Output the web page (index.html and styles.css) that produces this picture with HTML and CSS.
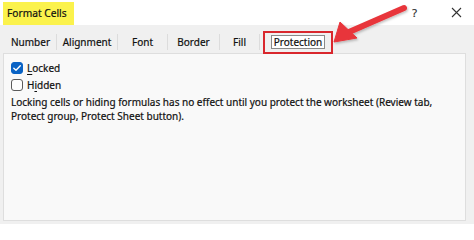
FILE: index.html
```html
<!DOCTYPE html>
<html>
<head>
<meta charset="utf-8">
<link rel="stylesheet" href="styles.css">
</head>
<body>
<div class="dialog">
  <div class="titlebar">
    <div class="title">Format Cells</div>
    <div class="controls">
      <span class="help">?</span>
      <svg class="close" width="11" height="11" viewBox="0 0 11 11"><path d="M1 1 L10 10 M10 1 L1 10" stroke="#333" stroke-width="1.1" fill="none"/></svg>
    </div>
  </div>
  <div class="tabs">
    <div class="tab t-number">Number</div>
    <div class="tab t-align">Alignment</div>
    <div class="tab t-font">Font</div>
    <div class="tab t-border">Border</div>
    <div class="tab t-fill">Fill</div>
    <div class="tab-selected"><span class="focus">Protection</span></div>
  </div>
  <div class="panel">
    <div class="check-row">
      <span class="box checked"><svg width="12" height="12" viewBox="0 0 12 12"><path d="M2.8 6.2 L5 8.3 L9.3 3.8" stroke="#fff" stroke-width="1.4" fill="none" stroke-linecap="round" stroke-linejoin="round"/></svg></span>
      <span class="label"><u>L</u>ocked</span>
    </div>
    <div class="check-row">
      <span class="box"></span>
      <span class="label">H<u>i</u>dden</span>
    </div>
    <p class="note">Locking cells or hiding formulas has no effect until you protect the worksheet (Review tab,<br>Protect group, Protect Sheet button).</p>
  </div>
  <svg class="arrow" width="474" height="224" viewBox="0 0 474 224">
    <defs>
      <filter id="sh" x="-20%" y="-20%" width="140%" height="140%">
        <feDropShadow dx="1" dy="1.5" stdDeviation="1.2" flood-color="#000" flood-opacity="0.25"/>
      </filter>
    </defs>
    <g filter="url(#sh)" fill="#e8353b" stroke="#e8353b">
      <line x1="404" y1="8" x2="349" y2="32" stroke-width="6" stroke-linecap="round"/>
      <polygon points="334,42 340,22 357,38" stroke-width="1" stroke-linejoin="round"/>
    </g>
  </svg>
</div>
</body>
</html>
```
FILE: styles.css
```css
* { box-sizing: border-box; }
html, body { margin: 0; padding: 0; }
body {
  width: 474px;
  height: 224px;
  overflow: hidden;
  background: #ffffff;
  font-family: "Noto Sans", "Open Sans", sans-serif;
  font-size: 10px;
  color: #111111;
  -webkit-text-stroke: 0.2px #111111;
}
.dialog {
  position: relative;
  width: 474px;
  height: 224px;
  background: #f0f0f0;
}
.titlebar {
  height: 25px;
  background: #ffffff;
  display: flex;
  justify-content: space-between;
  align-items: flex-start;
}
.title {
  margin: 2px 0 0 3px;
  height: 23px;
  padding: 0 7px 0 4px;
  background: #fbf24c;
  font-size: 10.2px;
  line-height: 22px;
  color: #111;
}
.controls {
  display: flex;
  align-items: center;
  height: 25px;
  padding-right: 12px;
}
.help {
  font-size: 11px;
  margin-right: 34px;
  color: #333;
}
.close { display: block; }
.tabs {
  display: flex;
  align-items: center;
  height: 28px;
  padding: 6px 0 0 5px;
  font-size: 10px;
}
.tab {
  height: 16px;
  line-height: 16px;
  text-align: center;
  border-right: 1px solid #dcdcdc;
}
.t-number { width: 52px; }
.t-align { width: 61px; }
.t-font { width: 50px; }
.t-border { width: 52px; }
.t-fill { width: 40px; }
.tab-selected {
  margin-left: 3px;
  width: 70px;
  height: 23px;
  border: 2px solid #d9272d;
  display: flex;
  align-items: center;
  justify-content: center;
}
.focus {
  display: block;
  background: #ffffff;
  border: 1px solid #8a8a8a;
  padding: 0 2px;
  height: 14px;
  line-height: 12px;
}
.panel {
  margin: 0 8px 0 3px;
  height: 168px;
  background: #f9f9f9;
  border: 1px solid #dedede;
  padding: 5px 0 0 7px;
}
.check-row {
  display: flex;
  align-items: center;
  height: 17px;
}
.box {
  width: 12px;
  height: 12px;
  border: 1px solid #5a5a5a;
  border-radius: 3px;
  background: #fdfdfd;
  margin-right: 4px;
  display: flex;
}
.box.checked {
  background: #0a63c5;
  border-color: #0a63c5;
}
.box svg { display: block; margin: -1px; }
.label u { text-decoration-thickness: 1px; text-underline-offset: 2px; }
.note {
  margin: 2px 0 0 0;
  line-height: 14px;
  white-space: nowrap;
}
.arrow {
  position: absolute;
  left: 0;
  top: 0;
  pointer-events: none;
}
```
